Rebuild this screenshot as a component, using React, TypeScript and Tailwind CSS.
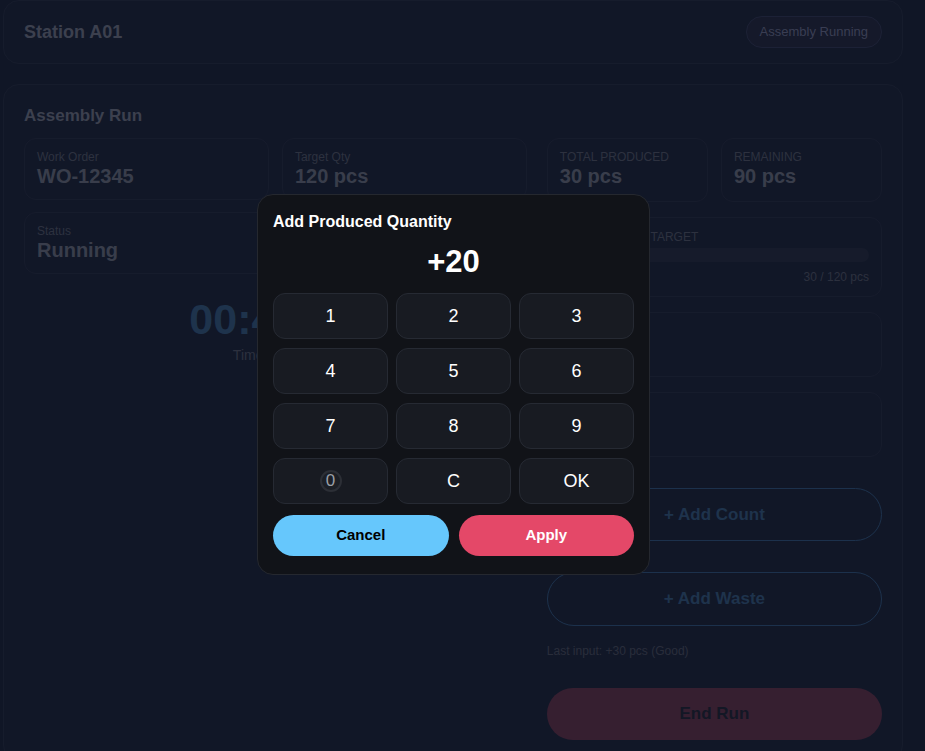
import { useState } from "react";

type Stat = { label: string; value: string };

const leftStats: Stat[] = [
  { label: "Work Order", value: "WO-12345" },
  { label: "Target Qty", value: "120 pcs" },
  { label: "Status", value: "Running" },
  { label: "Shift", value: "Day A" },
];

const keys = ["1", "2", "3", "4", "5", "6", "7", "8", "9", "0", "C", "OK"];

function StatCard({ label, value, upper, tall }: Stat & { upper?: boolean; tall?: boolean }) {
  return (
    <div
      className={`rounded-xl border border-[#262f4a] bg-[#1d2742] px-3 pt-[11px] ${tall ? "pb-[13px]" : "pb-[11px]"}`}
    >
      <div className={`text-[12px] leading-[14px] text-[#4b536a] ${upper ? "uppercase" : ""}`}>{label}</div>
      <div className="text-[20px] font-bold leading-6 text-[#5f677d]">{value}</div>
    </div>
  );
}

function Keypad({ onClose }: { onClose: () => void }) {
  const [amount, setAmount] = useState("20");

  const press = (k: string) => {
    if (k === "C") return setAmount("");
    if (k === "OK") return;
    setAmount((a) => (a + k).replace(/^0+/, "").slice(0, 4));
  };

  return (
    <div className="w-[393px] rounded-2xl border border-[#25282f] bg-[#111318] px-[15px] pt-[17px] pb-[18px]">
      <h2 className="text-[16px] font-bold leading-5 text-white">Add Produced Quantity</h2>
      <div className="mt-[10px] text-center text-[31px] font-bold leading-10 text-white">+{amount || "0"}</div>
      <div className="mt-[11px] grid grid-cols-3 gap-x-2 gap-y-[9px]">
        {keys.map((k) => (
          <button
            key={k}
            type="button"
            onClick={() => press(k)}
            className="flex h-[46px] items-center justify-center rounded-xl border border-[#262a33] bg-[#181b22] text-[18px] text-white"
          >
            {k === "0" ? (
              <span className="flex size-[22px] items-center justify-center rounded-full border-2 border-[#2c2f36] bg-[#1c1f25] text-[17px] text-[#9a9ea6]">
                0
              </span>
            ) : (
              k
            )}
          </button>
        ))}
      </div>
      <div className="mt-[11px] grid grid-cols-2 gap-[10px]">
        <button
          type="button"
          onClick={onClose}
          className="h-[41px] rounded-full bg-[#66c7fc] text-[15px] font-bold text-black"
        >
          Cancel
        </button>
        <button type="button" onClick={onClose} className="h-[41px] rounded-full bg-[#e44868] text-[15px] font-bold text-white">
          Apply
        </button>
      </div>
    </div>
  );
}

export default function App() {
  const [open, setOpen] = useState(true);

  return (
    <div className="min-h-screen bg-[#1c2640] font-['Liberation_Sans',Arial,sans-serif]">
      <div className="w-[904px] pl-[3px] pr-px">
        {/* station header */}
        <header className="flex h-16 items-center justify-between rounded-2xl border border-[#262f4a] bg-[#1d2742] px-5">
          <h1 className="text-[18px] font-bold text-[#646b83]">Station A01</h1>
          <span className="flex h-8 items-center rounded-full border border-[#30385a] bg-[#232a46] px-[13px] text-[13px] text-[#60678a]">
            Assembly Running
          </span>
        </header>

        <section className="mt-5 rounded-2xl border border-[#262f4a] bg-[#1d2742] px-5 pt-[21px] pb-5">
          <h2 className="text-[17px] font-bold leading-5 text-[#646b83]">Assembly Run</h2>

          <div className="mt-3 grid grid-cols-[3fr_2fr] gap-5">
            {/* left: order info + timer */}
            <div>
              <div className="grid grid-cols-2 gap-x-[13px] gap-y-3">
                {leftStats.map((s) => (
                  <StatCard key={s.label} {...s} />
                ))}
              </div>
              <div className="mt-6 text-center">
                <div className="text-[43px] font-bold leading-[43px] text-[#33567f]">00:42:18</div>
                <div className="mt-1 text-[14px] leading-5 text-[#4a5168]">Time Elapsed</div>
              </div>
            </div>

            {/* right: counters + actions */}
            <div className="flex flex-col">
              <div className="grid grid-cols-2 gap-[13px]">
                <StatCard label="Total Produced" value="30 pcs" upper tall />
                <StatCard label="Remaining" value="90 pcs" upper tall />
              </div>

              <div className="mt-[15px] rounded-xl border border-[#262f4a] bg-[#1d2742] px-3 py-3">
                <div className="text-[12px] leading-[14px] uppercase text-[#4b536a]">Progress to target</div>
                <div className="mt-1 h-3.5 overflow-hidden rounded-full bg-[#252e48]">
                  <div className="h-full rounded-full bg-[#33567f]" style={{ width: `${(30 / 120) * 100}%` }} />
                </div>
                <div className="mt-2 text-right text-[12px] leading-[14px] text-[#4a5168]">30 / 120 pcs</div>
              </div>

              <div className="mt-[15px] h-[65px] rounded-xl border border-[#262f4a] bg-[#1d2742] px-3 pt-[11px]">
                <div className="text-[12px] leading-[14px] uppercase text-[#4b536a]">Good</div>
                <div className="text-[20px] font-bold leading-6 text-[#5f677d]">30 pcs</div>
              </div>
              <div className="mt-[15px] h-[65px] rounded-xl border border-[#262f4a] bg-[#1d2742] px-3 pt-[11px]">
                <div className="text-[12px] leading-[14px] uppercase text-[#4b536a]">Waste</div>
                <div className="text-[20px] font-bold leading-6 text-[#5f677d]">0 pcs</div>
              </div>

              <button
                type="button"
                onClick={() => setOpen(true)}
                className="mt-[31px] h-[53px] rounded-full border border-[#30537f] text-[17px] font-bold text-[#33557f]"
              >
                + Add Count
              </button>
              <button
                type="button"
                className="mt-[31px] h-[54px] rounded-full border border-[#30537f] text-[17px] font-bold text-[#33557f]"
              >
                + Add Waste
              </button>
              <p className="mt-[18px] text-[12px] leading-[14px] text-[#454c62]">Last input: +30 pcs (Good)</p>
              <button type="button" className="mt-[30px] h-[52px] rounded-full bg-[#5b3451] text-[17px] font-bold text-[#20273e]">
                End Run
              </button>
            </div>
          </div>
        </section>
      </div>

      {open && (
        <div className="fixed inset-0 bg-black/40">
          <div className="flex h-full w-[907px] items-center justify-center pt-[18px]">
            <Keypad onClose={() => setOpen(false)} />
          </div>
        </div>
      )}
    </div>
  );
}
